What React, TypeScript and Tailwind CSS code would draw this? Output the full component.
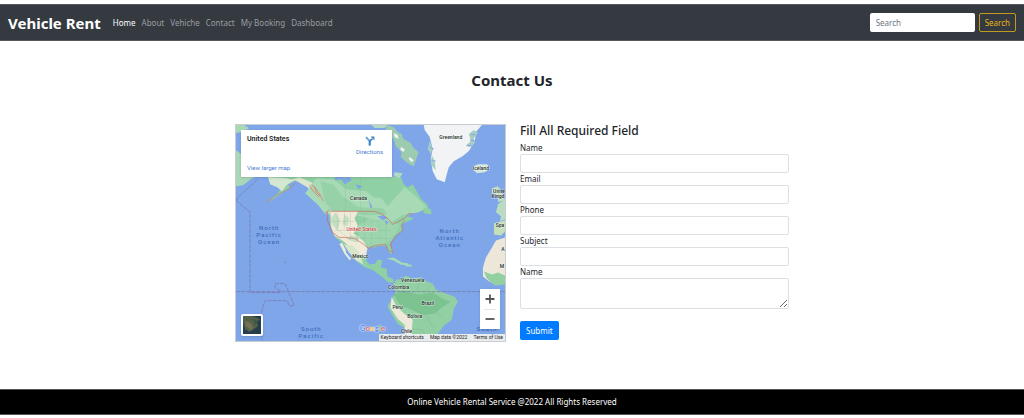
import React from "react";

const links = ["Home", "About", "Vehiche", "Contact", "My Booking", "Dashboard"];

const fields = [
  { id: "name", label: "Name", type: "text" },
  { id: "email", label: "Email", type: "email" },
  { id: "phone", label: "Phone", type: "tel" },
  { id: "subject", label: "Subject", type: "text" },
];

type MapLabel = { x: number; y: number; text: string };

const countries: MapLabel[] = [
  { x: 450, y: 139, text: "Greenland" },
  { x: 480, y: 170, text: "Iceland" },
  { x: 358, y: 200, text: "Canada" },
  { x: 360, y: 258, text: "Mexico" },
  { x: 412, y: 281, text: "Venezuela" },
  { x: 398, y: 288, text: "Colombia" },
  { x: 427, y: 304, text: "Brazil" },
  { x: 397, y: 308, text: "Peru" },
  { x: 414, y: 317, text: "Bolivia" },
  { x: 406, y: 332, text: "Chile" },
  { x: 498, y: 193, text: "Unite" },
  { x: 497, y: 198, text: "Kingd" },
  { x: 499, y: 227, text: "Spa" },
  { x: 502, y: 251, text: "A" },
  { x: 501, y: 267, text: "M" },
];

const oceans: MapLabel[] = [
  { x: 269, y: 230, text: "North" },
  { x: 269, y: 237, text: "Pacific" },
  { x: 269, y: 244, text: "Ocean" },
  { x: 449, y: 233, text: "North" },
  { x: 449, y: 240, text: "Atlantic" },
  { x: 449, y: 247, text: "Ocean" },
  { x: 311, y: 330, text: "South" },
  { x: 311, y: 337, text: "Pacific" },
  { x: 486, y: 330, text: "South" },
];

function WorldMap() {
  return (
    <svg viewBox="236 125 268 215" preserveAspectRatio="xMidYMid slice" className="block h-full w-full" role="img" aria-label="Map of the Americas">
      <rect x="230" y="120" width="280" height="226" fill="#7ea6e9" />

      <path d="M236 125h8l5 3-6 4-7 1zM236 150l5 4 2 14 7 4 12 1-10 5-9 7-7 1z" fill="#a8d8b5" />

      <path
        d="M262 170L388 170 386 183 393 188 394 194 390 198 389 204 386 203 384 196 377 193 373 187 376 181 372 178 388 177 396 176 401 178 403 184 407 187 412 184 416 191 420 198 427 205 428 209 420 211 411 213 406 216 413 218 410 220 401 224 402 230 395 235 391 241 389 244 392 249 391 254 388 251 386 246 379 245 373 247 367 247 365 253 366 260 369 264 375 263 377 259 382 260 380 267 386 268 387 276 393 279 393 282 388 282 381 276 373 270 363 266 354 259 348 250 342 243 334 236 330 226 329 214 326 207 319 199 311 190 305 182 297 180 288 184 290 188 283 192 273 199 266 202 278 193 281 188 274 184 270 180z"
        fill="#8fd0a4"
      />
      <path d="M268 177l18 1 8 2-8 5-4 6-5-4-7-3z" fill="#d4e8d2" />
      <path d="M287 181l12-4 12 5 8 9 6 13-7-5-11-12-12-7z" fill="#dbe6d0" />
      <path d="M316 178l17 1 13 10 20 2 7 6 8 1 6 8 8-9 9-10 10 8 12 12-8 5-16 3-13 8-33-8-31-1-7-9-13-12z" fill="#a8dab6" />
      <path d="M320 181l13 3 9 12 16 11 24 1 5 6-20 1-34-3-8-10z" fill="#83c89a" opacity=".5" />
      <path d="M330 211h28l-4 7 4 8-5 7 10 7 4 8-2 9-6-3-10-8-7-6-8-5-3-8z" fill="#f0ead8" />
      <path d="M357 226l12-8 16 2 14 4-3 8-7 8-7 5-14 1-9-9z" fill="#9dd6ae" />
      <path d="M335 212l5 8-3 10-4-4-3-7zM344 214l5 4-2 8-5-2zM350 235l10 1-4 6-9-3z" fill="#c6dfc0" />
      <path d="M344 244l4 7 6 7 5 4-3-10-5-6z" fill="#ece8d8" />
      <path d="M340 243l5 10 5 6M341 243l4 8" fill="none" stroke="#e9eada" strokeWidth="2" />
      <path d="M344 244l8 1 6 6 5 13-7-4-7-8z" fill="#d7e6c9" />
      <path d="M341 179l8-3 2 4-7 4zM338 170l9 4-5 5-8 1zM355 184l7 2-4 3zM368 199l2 9 2-1zM377 216l6-1 4 3-5 2zM384 220l2 5 2-4z" fill="#7ea6e9" />
      <path d="M311 184l5 5 4 6 3 6M309 185l4 6 6 6M314 186l2 6 4 4" fill="none" stroke="#dc7a70" strokeWidth=".8" />
      <path d="M266 202l12-8 8-4 6-4 3-4" fill="none" stroke="#c67a78" strokeWidth=".7" />
      <path
        d="M330 211l44 0 8 3 6 5 4 5 12-6 4-5 4 1M404 220l-3 5 1 5-7 6-5 7 2 9-4-2-3-6-11 1-6 3-6-5-8-5-9-1-6 0-7-5-5-12V212l-2 1 4-4"
        fill="none"
        stroke="#d0685f"
        strokeWidth=".7"
      />
      <path
        d="M337 212v17l12 9M344 212v16M350 212v26M357 212v30M364 214v27M371 218v28M331 221h46M334 230h57M345 238h45M378 220l3 25M385 221v24M345 170v40M360 170v41"
        fill="none"
        stroke="#8fb69b"
        strokeWidth=".4"
        opacity=".65"
      />

      <path d="M386 125l7 2 4 5 4 2 2 5 7 4 3 5 5 4-2 6-3 8-6-3-7-6 1-5-6-6-2-7-8-5z" fill="#9ccbb0" />
      <path d="M393 133l4 2 1 4-4-2zM400 147l4 2-1 3-3-2zM409 157l4 3-2 2-3-3z" fill="#f1f3f2" />
      <path d="M371 125h16l-3 3h-10zM394 172l8 1-3 5-6-3z" fill="#b5d8c4" />
      <path d="M423 125h58l-6 7-1 9-6 10-6 5-9 5-5 6-2 7-2 8-8-3-4-8-2-13 2-9-3-12-5-7z" fill="#f2f3f4" />
      <path d="M429 141l3 8-2 4 4 8 1 9-5-6 1-8-4-7zM468 134l5-4 4 3-4 5 1 5-5 4-4-1 5-5z" fill="#a8cec4" />
      <path d="M470 134l4 1M469 140l5 1M466 145l5 1M429 147l4 2M431 160l4 1" stroke="#7ea6e9" strokeWidth="1" />
      <path d="M473 166l4-2 9 0 3 4-5 4-8 1-4-4z" fill="#d5e6dd" />
      <path d="M423 207l7 2 1 5-8-1z" fill="#8fd0a4" />
      <path d="M386 258l7-1 8 5 7 1-1 2-7-1-7-4z" fill="#a8dab6" />
      <path d="M405 264l5 0 2 2-7 0z" fill="#a8dab6" />
      <path d="M491 188l6-2 4 6 3 8-7 2 0-6-6-3zM497 204l7-5v20l-5 2 1-5-5-4z" fill="#b9dcc0" />
      <path d="M493 223l11-3v11l-4 4-7-1z" fill="#c5dfb9" />
      <path d="M504 237l-9 3-4 7-6 10-3 10v9l5 4 7 4 10-1z" fill="#ece7d9" />
      <path d="M483 271l8 3 6-2 7 3v9l-10 1-8-7z" fill="#92d0a2" />

      <path
        d="M393 283l3-4 5 0 4-4 6 3 9-1 6 4 6 2 3 6 10 4 9 3 3 5-4 7-2 11-8 6-5 7-6 6-2 7h-23l-2-17-8-5-6-10-4-7 4-8 4-6z"
        fill="#92d0a4"
      />
      <path d="M393 294l10-4 15 4 14-2 10 6 8 3-8 5-8 7-13 1-12-6-9-3z" fill="#75bf8a" opacity=".8" />
      <path d="M391 296l5 10 9 8 7 5-1 13-1 8h-5l-1-16-7-6-7-11z" fill="#efe9dc" />
      <path d="M396 290l14 3 5 7 9-4 8 1M402 306l8-2 6 6 10 4 3 8 5 5M416 289l5-8M425 290l6-6M412 328l9 1 6 8M438 297l-3 13 7 8" fill="none" stroke="#8ab29a" strokeWidth=".5" />

      <path
        d="M236 200l5-6 17-15M236 200l14 12v80h30v-2l-5-3v-4h10l9 22h-5l-2-5h-22l-3 8v32M236 291h268"
        fill="none"
        stroke="#7b74a8"
        strokeWidth=".7"
        strokeDasharray="4 1"
      />
      <ellipse cx="285" cy="262" rx="1.2" ry=".8" fill="#8290bd" />

      <g fontFamily="Roboto, sans-serif" textAnchor="middle">
        <g fontSize="5" fontWeight="500" fill="#26302d" stroke="#ffffff" strokeWidth="1" strokeOpacity=".55" paintOrder="stroke">
          {countries.map((c) => (
            <text key={c.text} x={c.x} y={c.y}>{c.text}</text>
          ))}
        </g>
        <text x="361" y="231" fontSize="5" fontWeight="500" fill="#cf3f3f" stroke="#fff" strokeWidth="1" strokeOpacity=".6" paintOrder="stroke">United States</text>
        <g fontSize="6" fontWeight="500" fill="#3e6dbb" letterSpacing="1">
          {oceans.map((o) => (
            <text key={`${o.x}-${o.text}`} x={o.x} y={o.y}>{o.text}</text>
          ))}
        </g>
      </g>
    </svg>
  );
}

function GoogleLogo() {
  const letters = [
    ["G", "text-[#5a8df0]"],
    ["o", "text-[#e8635a]"],
    ["o", "text-[#f2c14b]"],
    ["g", "text-[#5a8df0]"],
    ["l", "text-[#56b06b]"],
    ["e", "text-[#e8635a]"],
  ];
  return (
    <span className="absolute bottom-2 left-[46%] font-['Lato',sans-serif] text-[8px] leading-[10px] font-bold [text-shadow:0_0_2px_#fff,0_0_1px_#fff]">
      {letters.map(([ch, color], i) => (
        <span key={i} className={color}>{ch}</span>
      ))}
    </span>
  );
}

function MapPanel() {
  return (
    <section aria-label="Location" className="relative aspect-[270/217] flex-1 overflow-hidden border border-[#c9cdd2] font-['Roboto',sans-serif]">
      <WorldMap />

      <div className="absolute top-[5px] left-[5px] flex h-[47px] w-[151px] justify-between bg-white px-[6px] pt-1 pb-1 shadow-sm">
        <div className="flex flex-col justify-between">
          <h3 className="text-[7px] leading-[11px] font-semibold text-[#222]">United States</h3>
          <a href="#larger" className="text-[6px] leading-[10px] text-[#4a7bd6]">View larger map</a>
        </div>
        <a href="#directions" className="mr-[3px] flex flex-col items-center pt-[2px] text-[6px] leading-[10px] text-[#4a7bd6]">
          <svg viewBox="0 0 10 10" className="mb-px block size-[10px]" aria-hidden="true">
            <path d="M1 1.2L4.7 5.2V9.6" fill="none" stroke="#62a5dc" strokeWidth="1.8" />
            <path d="M4.7 9.6V5.2L7.2 2.8" fill="none" stroke="#3f7fc9" strokeWidth="1.8" />
            <path d="M5.6.6H9.4V4.6z" fill="#3f7fc9" />
          </svg>
          Directions
        </a>
      </div>

      <button type="button" aria-label="Show satellite imagery" className="absolute bottom-[5px] left-[5px] size-[22px] overflow-hidden rounded-[2px] border-2 border-white shadow-sm">
        <svg viewBox="0 0 18 18" className="block h-full w-full" aria-hidden="true">
          <rect width="18" height="18" fill="#263d4c" />
          <path d="M0 0h9l8 3-3 3 1 4-5 4-4 2-4-3-2-8z" fill="#53614b" />
          <path d="M2 5l6 2 2 5-2 2-5-4z" fill="#786e51" />
          <path d="M10 3l5 2-3 4z" fill="#3f573f" />
        </svg>
      </button>

      <GoogleLogo />

      <div className="absolute right-[5px] bottom-[12px] flex w-5 flex-col bg-white text-[#555] shadow-sm">
        <button type="button" aria-label="Zoom in" className="flex h-5 items-center justify-center">
          <svg viewBox="0 0 10 10" className="size-[10px]" aria-hidden="true"><path d="M5 .5v9M.5 5h9" stroke="currentColor" strokeWidth="1.8" /></svg>
        </button>
        <span className="mx-1 h-px bg-[#e6e6e6]" />
        <button type="button" aria-label="Zoom out" className="flex h-[19px] items-center justify-center">
          <svg viewBox="0 0 10 10" className="size-[10px]" aria-hidden="true"><path d="M.5 5h9" stroke="currentColor" strokeWidth="1.8" /></svg>
        </button>
      </div>

      <div className="absolute right-0 bottom-0 flex h-[7px] items-center gap-[6px] bg-[#e9eced] px-[2px] text-[5px] leading-[7px] whitespace-nowrap text-[#222]">
        <button type="button">Keyboard shortcuts</button>
        <span>Map data ©2022</span>
        <a href="#terms">Terms of Use</a>
      </div>
    </section>
  );
}

export default function App() {
  return (
    <div className="bg-white pt-1 font-['Noto_Sans',sans-serif] text-[8px] text-[#212529]">
      <header className="flex h-[37px] items-center border-y border-[#55595d] bg-[#343a40] px-2">
        <a href="#top" className="text-[15px] leading-5 font-bold whitespace-nowrap text-white">Vehicle Rent</a>
        <nav className="ml-3 flex gap-[6px]">
          {links.map((link, i) => (
            <a key={link} href={`#${link}`} className={i === 0 ? "text-white" : "text-[#9a9da0]"}>{link}</a>
          ))}
        </nav>
        <form className="ml-auto flex gap-1" onSubmit={(e) => e.preventDefault()}>
          <input type="search" aria-label="Search" placeholder="Search" className="h-[19px] w-[105px] rounded-[2px] bg-white px-[6px] text-[#495057] outline-none placeholder:text-[#6c757d]" />
          <button type="submit" className="h-[19px] rounded-[2px] border border-[#c29a1c] px-[5px] leading-4 text-[#e9b515]">Search</button>
        </form>
      </header>

      <main className="px-4 pt-[29px] pb-[47px]">
        <h1 className="text-center text-[15px] leading-5 font-bold">Contact Us</h1>
        <div className="mx-auto mt-[34px] flex max-w-[554px] items-start gap-[14px]">
          <MapPanel />
          <form className="flex-1" onSubmit={(e) => e.preventDefault()}>
            <h2 className="mb-1 text-[12px] leading-[14px] font-medium">Fill All Required Field</h2>
            {fields.map((f) => (
              <div key={f.id}>
                <label htmlFor={f.id} className="block leading-3">{f.label}</label>
                <input id={f.id} type={f.type} className="block h-[19px] w-full rounded-[2px] border border-[#dcdfe3] px-[6px] outline-none" />
              </div>
            ))}
            <label htmlFor="message" className="block leading-3">Name</label>
            <textarea id="message" className="block h-[31px] w-full resize rounded-[2px] border border-[#dcdfe3] px-[6px] outline-none" />
            <button type="submit" className="mt-3 h-[19px] rounded-[2px] bg-[#007bff] px-[6px] text-white">Submit</button>
          </form>
        </div>
      </main>

      <footer className="mb-[3px] border-y border-[#555] bg-black py-[6px] text-center leading-3 text-white">
        Online Vehicle Rental Service @2022 All Rights Reserved
      </footer>
    </div>
  );
}
